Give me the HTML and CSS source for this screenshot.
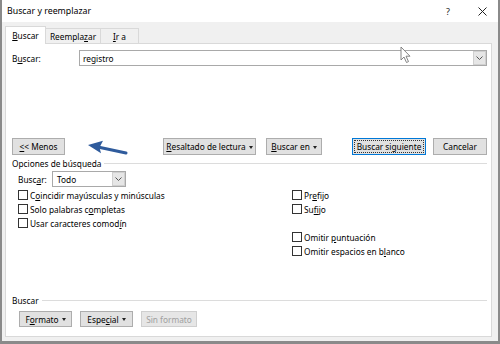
FILE: index.html
```html
<!DOCTYPE html>
<html lang="es">
<head>
<meta charset="utf-8">
<title>Buscar y reemplazar</title>
<link rel="stylesheet" href="styles.css">
</head>
<body>
<div class="window">
  <div class="titlebar">
    <span class="title">Buscar y reemplazar</span>
    <span class="help">?</span>
    <span class="close"><svg width="9" height="9" viewBox="0 0 9 9"><path d="M0.5 0.5 L8.5 8.5 M8.5 0.5 L0.5 8.5" stroke="#222" stroke-width="1" fill="none"/></svg></span>
  </div>
  <div class="body">
    <div class="tabs">
      <div class="tab active"><span><u>B</u>uscar</span></div>
      <div class="tab t-reemp"><span>Reempla<u>z</u>ar</span></div>
      <div class="tab t-ira"><span><u>I</u>r a</span></div>
    </div>
    <div class="panel">
      <div class="find-row">
        <span class="find-label">B<u>u</u>scar:</span>
        <div class="input">
          <span class="input-text">registro</span>
          <span class="dd"><svg width="7" height="4" viewBox="0 0 7 4"><path d="M0.5 0.5 L3.5 3.5 L6.5 0.5" stroke="#555" fill="none"/></svg></span>
        </div>
      </div>
      <div class="btn-row">
        <div class="btn w-menos"><span><u>&lt;</u>&lt; Menos</span></div>
        <div class="btn w-resal push"><span><u>R</u>esaltado de lectura</span><i class="tri"></i></div>
        <div class="btn w-bus g10"><span><u>B</u>uscar en</span><i class="tri"></i></div>
        <div class="btn w-sig g30 primary"><span class="focus">Buscar siguiente</span></div>
        <div class="btn w-can g7"><span>Cancelar</span></div>
      </div>
      <div class="group-head"><span>Opciones de búsqueda</span><i class="rule"></i></div>
      <div class="options">
        <div class="col col-left">
          <div class="combo-row">
            <span class="combo-label">Busc<u>a</u>r:</span>
            <div class="combo">
              <span class="combo-text">Todo</span>
              <span class="dd"><svg width="7" height="4" viewBox="0 0 7 4"><path d="M0.5 0.5 L3.5 3.5 L6.5 0.5" stroke="#555" fill="none"/></svg></span>
            </div>
          </div>
          <div class="cb"><i class="box"></i><span>C<u>o</u>incidir mayúsculas y minúsculas</span></div>
          <div class="cb"><i class="box"></i><span>Solo palabras c<u>o</u>mpletas</span></div>
          <div class="cb"><i class="box"></i><span>Usar caracteres comod<u>í</u>n</span></div>
        </div>
        <div class="col col-right">
          <div class="cb"><i class="box"></i><span>Pr<u>e</u>fijo</span></div>
          <div class="cb"><i class="box"></i><span>Su<u>f</u>ijo</span></div>
          <div class="cb empty"></div>
          <div class="cb"><i class="box"></i><span>Omitir <u>p</u>untuación</span></div>
          <div class="cb"><i class="box"></i><span>Omitir espacios en b<u>l</u>anco</span></div>
        </div>
      </div>
      <div class="group-head group-buscar"><span>Buscar</span><i class="rule"></i></div>
      <div class="fmt-row">
        <div class="btn w-fmt"><span>F<u>o</u>rmato</span><i class="tri"></i></div>
        <div class="btn w-esp g8"><span>Espe<u>c</u>ial</span><i class="tri"></i></div>
        <div class="btn w-sin g8 disabled"><span>Sin formato</span></div>
      </div>
    </div>
  </div>
  <svg class="cursor" width="12" height="18" viewBox="0 0 12 18"><path d="M1 1 L1 14 L4 11 L6.5 16.5 L8.5 15.6 L6 10.2 L10 10.2 Z" fill="#fff" stroke="#777" stroke-width="0.9" stroke-linejoin="round"/></svg>
  <svg class="arrow" width="44" height="20" viewBox="0 0 44 20"><path d="M41 14 L14 8.2" stroke="#2f5b9c" stroke-width="3" stroke-linecap="round" fill="none"/><path d="M3 6 L18 1.8 L14.5 8.6 L16 14.2 Z" fill="#2f5b9c"/></svg>
</div>
</body>
</html>
```

FILE: styles.css
```css
* { box-sizing: border-box; }
html, body { margin: 0; padding: 0; }
body {
  width: 500px;
  height: 344px;
  overflow: hidden;
  background: #ffffff;
  font-family: "Noto Sans", "Open Sans", sans-serif;
  font-size: 8.3px;
  color: #000;
}
u { text-decoration: underline; text-underline-offset: 1px; text-decoration-thickness: 1px; }

.window {
  position: relative;
  width: 500px;
  height: 344px;
  display: flex;
  flex-direction: column;
  border-left: 2px solid #8a8a8a;
  border-right: 2px solid #8a8a8a;
  border-bottom: 3px solid #8a8a8a;
  background: #f0f0f0;
}

.titlebar {
  height: 22px;
  flex: none;
  background: #ffffff;
  display: flex;
  align-items: center;
  padding-left: 5px;
}
.title { font-size: 8.8px; flex: 1; }
.help { width: 10px; text-align: center; font-size: 9px; margin-right: 24px; color: #222; }
.close { width: 10px; display: flex; align-items: center; justify-content: center; margin-right: 11px; }

.body {
  flex: 1;
  display: flex;
  flex-direction: column;
  padding: 4px 6px 4px 3px;
  min-height: 0;
}

.tabs {
  height: 17px;
  display: flex;
  align-items: flex-end;
  flex: none;
}
.tab {
  height: 15px;
  border: 1px solid #d9d9d9;
  border-bottom: none;
  background: #f0f0f0;
  display: flex;
  align-items: center;
  justify-content: center;
  margin-left: -1px;
}
.tab.active {
  margin-left: 0;
  width: 41px;
  height: 18px;
  margin-bottom: -1px;
  background: #fff;
  z-index: 1;
}
.t-reemp { width: 56px; }
.t-ira { width: 39px; }

.panel {
  flex: 1;
  background: #ffffff;
  border: 1px solid #d9d9d9;
  display: flex;
  flex-direction: column;
  padding: 0 4px 0 6px;
}

.find-row {
  margin-top: 6px;
  height: 16px;
  display: flex;
  align-items: center;
}
.find-label { width: 67px; }
.input {
  flex: 1;
  height: 16px;
  border: 1px solid #a9a9a9;
  display: flex;
  align-items: center;
  padding-left: 3px;
}
.input-text { flex: 1; }
.dd {
  width: 13px;
  height: 14px;
  background: #e6e6e6;
  border: 1px solid #d0d0d0;
  display: flex;
  align-items: center;
  justify-content: center;
}

.btn-row {
  margin-top: 72px;
  height: 17px;
  display: flex;
}
.btn {
  height: 17px;
  background: #e1e1e1;
  border: 1px solid #adadad;
  display: flex;
  align-items: center;
  justify-content: center;
  white-space: nowrap;
}
.tri {
  display: inline-block;
  width: 0;
  height: 0;
  border-left: 2.5px solid transparent;
  border-right: 2.5px solid transparent;
  border-top: 3px solid #222;
  margin-left: 3px;
  margin-top: 1px;
}
.w-menos { width: 53px; }
.w-resal { width: 93px; }
.w-bus { width: 56px; }
.w-sig { width: 74px; }
.w-can { width: 54px; }
.push { margin-left: auto; }
.g10 { margin-left: 10px; }
.g30 { margin-left: 30px; }
.g7 { margin-left: 7px; }
.g8 { margin-left: 8px; }
.primary { border-color: #0078d7; padding: 1px; }
.focus {
  display: flex;
  align-items: center;
  justify-content: center;
  width: 100%;
  height: 100%;
  border: 1px dotted #333;
}
.disabled { color: #a0a0a0; background: #e6e6e6; border-color: #cfcfcf; }

.group-head {
  height: 14px;
  margin-top: 1px;
  display: flex;
  align-items: center;
}
.rule { flex: 1; height: 1px; background: #dcdcdc; margin-left: 3px; }

.options {
  margin-top: 1px;
  display: flex;
  padding-left: 6px;
}
.col-left { width: 274px; }
.col-right { padding-top: 17px; }
.combo-row { height: 16px; margin-bottom: 1px; display: flex; align-items: center; }
.combo-label { width: 34px; }
.combo {
  width: 74px;
  height: 16px;
  border: 1px solid #a9a9a9;
  display: flex;
  align-items: center;
  padding-left: 4px;
}
.combo-text { flex: 1; }
.cb {
  height: 14px;
  display: flex;
  align-items: center;
}
.box {
  width: 10px;
  height: 10px;
  border: 1px solid #333;
  background: #fff;
  margin-right: 2px;
  flex: none;
}

.group-buscar { margin-top: 35px; }
.fmt-row {
  margin-top: 4px;
  height: 16px;
  display: flex;
  padding-left: 7px;
}
.fmt-row .btn { height: 16px; }
.w-fmt { width: 53px; }
.w-esp { width: 53px; }
.w-sin { width: 56px; }

.cursor { position: absolute; left: 398px; top: 46px; }
.arrow { position: absolute; left: 83px; top: 139px; }
```
